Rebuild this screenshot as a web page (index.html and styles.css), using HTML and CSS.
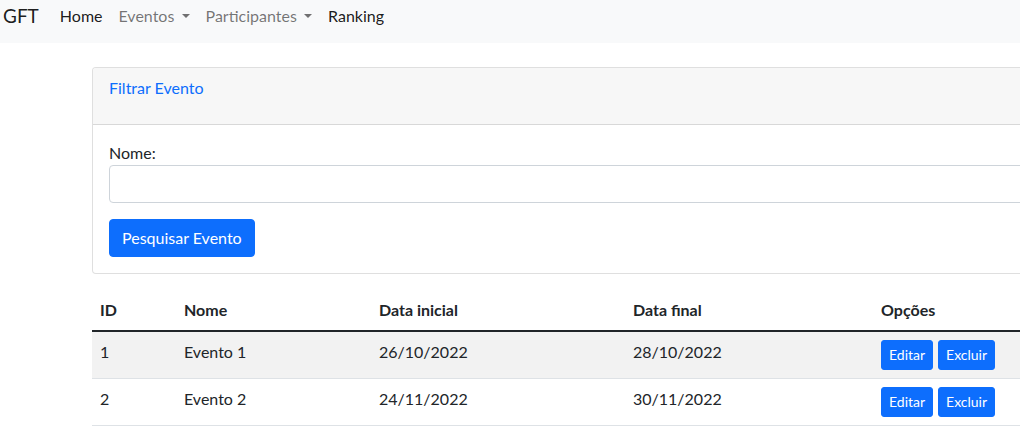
FILE: index.html
```html
<!DOCTYPE html>
<html lang="pt-BR">
<head>
<meta charset="utf-8">
<title>GFT</title>
<link rel="stylesheet" href="styles.css">
</head>
<body>
<nav class="navbar">
  <a class="brand" href="#">GFT</a>
  <ul class="nav">
    <li><a class="nav-link active" href="#">Home</a></li>
    <li><a class="nav-link muted dropdown" href="#">Eventos</a></li>
    <li><a class="nav-link muted dropdown" href="#">Participantes</a></li>
    <li><a class="nav-link active" href="#">Ranking</a></li>
  </ul>
</nav>
<main class="container">
  <section class="card">
    <div class="card-header"><a href="#" class="header-link">Filtrar Evento</a></div>
    <div class="card-body">
      <label class="label" for="nome">Nome:</label>
      <input class="input" id="nome" type="text">
      <button class="btn btn-primary">Pesquisar Evento</button>
    </div>
  </section>
  <table class="table">
    <thead>
      <tr>
        <th class="c-id">ID</th>
        <th class="c-nome">Nome</th>
        <th class="c-data1">Data inicial</th>
        <th class="c-data2">Data final</th>
        <th class="c-op">Opções</th>
      </tr>
    </thead>
    <tbody>
      <tr class="striped">
        <td>1</td><td>Evento 1</td><td>26/10/2022</td><td>28/10/2022</td>
        <td class="ops"><button class="btn btn-sm">Editar</button><button class="btn btn-sm">Excluir</button></td>
      </tr>
      <tr>
        <td>2</td><td>Evento 2</td><td>24/11/2022</td><td>30/11/2022</td>
        <td class="ops"><button class="btn btn-sm">Editar</button><button class="btn btn-sm">Excluir</button></td>
      </tr>
    </tbody>
  </table>
</main>
</body>
</html>
```
FILE: styles.css
```css
* { box-sizing: border-box; }
html, body { margin: 0; padding: 0; }
body {
  width: 1020px;
  overflow: hidden;
  font-family: Lato, "Noto Sans", sans-serif;
  font-size: 16px;
  line-height: 1.5;
  color: #212529;
  background: #fff;
}
a { text-decoration: none; }

.navbar {
  display: flex;
  align-items: flex-start;
  height: 43px;
  background: #f8f9fa;
  padding: 4px 0 0 3px;
}
.brand {
  font-size: 19px;
  line-height: 24px;
  color: rgba(0,0,0,.9);
  margin-right: 13px;
}
.nav { display: flex; list-style: none; margin: 0; padding: 0; }
.nav-link {
  display: block;
  padding: 0 8px;
  line-height: 23px;
  color: rgba(0,0,0,.9);
}
.nav-link.muted { color: rgba(0,0,0,.55); }
.dropdown::after {
  content: "";
  display: inline-block;
  margin-left: 0.45em;
  vertical-align: 0.255em;
  border-top: 0.3em solid;
  border-right: 0.3em solid transparent;
  border-left: 0.3em solid transparent;
}

.container {
  width: 1200px;
  padding: 24px 0 0 92px;
}
.card {
  border: 1px solid rgba(0,0,0,.125);
  border-radius: 4px;
  background: #fff;
}
.card-header {
  background: #f7f7f7;
  border-bottom: 1px solid rgba(0,0,0,.125);
  padding: 8px 16px 24px;
  border-radius: 3px 3px 0 0;
}
.header-link { color: #0d6efd; font-size: 16px; line-height: 24px; }
.card-body { padding: 16px; }
.label { display: block; line-height: 24px; }
.input {
  display: block;
  width: 100%;
  height: 38px;
  border: 1px solid #ced4da;
  border-radius: 4px;
  margin-bottom: 16px;
  font: inherit;
}
.btn {
  display: inline-block;
  font: inherit;
  color: #fff;
  background: #0d6efd;
  border: 1px solid #0d6efd;
  border-radius: 4px;
  padding: 6px 12px;
  line-height: 24px;
}
.btn-sm {
  font-size: 14px;
  line-height: 20px;
  padding: 4px 7px;
  border-radius: 3px;
  margin-right: 5px;
}

.table {
  border-collapse: collapse;
  table-layout: fixed;
  margin-top: 16px;
  width: 1100px;
}
.table th, .table td {
  text-align: left;
  padding: 8px;
  vertical-align: top;
}
.table th { font-weight: 700; border-bottom: 2px solid #212529; }
.table td { border-bottom: 1px solid #dee2e6; line-height: 24px; padding-top: 8px; }
.table td.ops { padding-top: 8px; padding-bottom: 8px; }
.striped td { background: #f2f2f2; }
.c-id { width: 84px; }
.c-nome { width: 195px; }
.c-data1 { width: 254px; }
.c-data2 { width: 248px; }
.c-op { width: 319px; }
```
